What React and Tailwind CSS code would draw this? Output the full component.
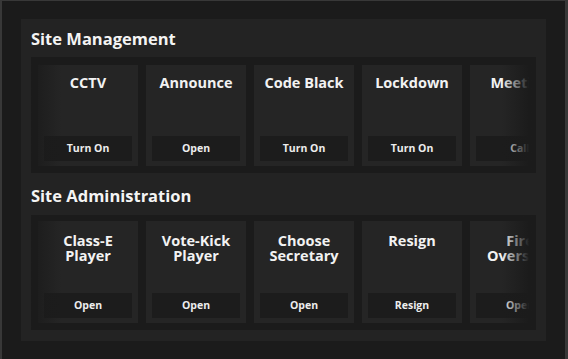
import React from 'react';

const management = [
  { title: 'CCTV', action: 'Turn On' },
  { title: 'Announce', action: 'Open' },
  { title: 'Code Black', action: 'Turn On' },
  { title: 'Lockdown', action: 'Turn On' },
  { title: 'Meeting', action: 'Call' },
];

const administration = [
  { title: 'Class-E Player', action: 'Open' },
  { title: 'Vote-Kick Player', action: 'Open' },
  { title: 'Choose Secretary', action: 'Open' },
  { title: 'Resign', action: 'Resign' },
  { title: 'Fire Overseer', action: 'Open' },
];

const Card = ({ title, action, cardClass, titleClass }) => (
  <div className={`w-[100px] shrink-0 bg-[#252525] px-[6px] pt-[6px] pb-[5px] flex flex-col ${cardClass}`}>
    <div className={`text-center text-[14.5px] leading-[15px] font-bold text-[#f2f2f2] px-1 ${titleClass}`}>
      {title}
    </div>
    <button
      type="button"
      className="mt-auto h-[25px] w-full bg-[#1c1c1c] text-[10.5px] font-bold text-[#ededed] flex items-center justify-center"
    >
      {action}
    </button>
  </div>
);

const Row = ({ items, rowClass, cardClass, titleClass }) => (
  <div className={`relative overflow-hidden bg-[#1b1b1b] ${rowClass}`}>
    <div className="flex gap-2 pl-[7px]">
      {items.map((item) => (
        <Card key={item.title} {...item} cardClass={cardClass} titleClass={titleClass} />
      ))}
    </div>
    <div className="absolute inset-y-0 left-0 w-[30px] bg-linear-to-r from-[#1b1b1b] to-transparent" />
    <div className="absolute inset-y-0 right-0 w-[34px] bg-linear-to-l from-[#1b1b1b] from-20% to-transparent" />
  </div>
);

const App = () => {
  return (
    <div
      className="h-[359px] w-full bg-[#1b1b1b] border-t border-l-2 border-r-[3px] border-[#383838] pt-[18px] px-[19px] pb-[18px]"
      style={{ fontFamily: '"Open Sans", sans-serif' }}
    >
      <div className="h-full bg-[#232323] px-[10px] pt-[8px]">
        <h2 className="text-[16.5px] leading-[24px] font-bold text-[#f4f4f4] mb-[6px]">Site Management</h2>
        <Row items={management} rowClass="h-[116px] pt-2" cardClass="h-[101px]" titleClass="mt-[4px]" />
        <h2 className="text-[16.5px] leading-[24px] font-bold text-[#f4f4f4] mt-[11px] mb-[7px]">Site Administration</h2>
        <Row items={administration} rowClass="h-[115px] pt-[6px]" cardClass="h-[102px]" titleClass="mt-[6px]" />
      </div>
    </div>
  );
};

export default App;
